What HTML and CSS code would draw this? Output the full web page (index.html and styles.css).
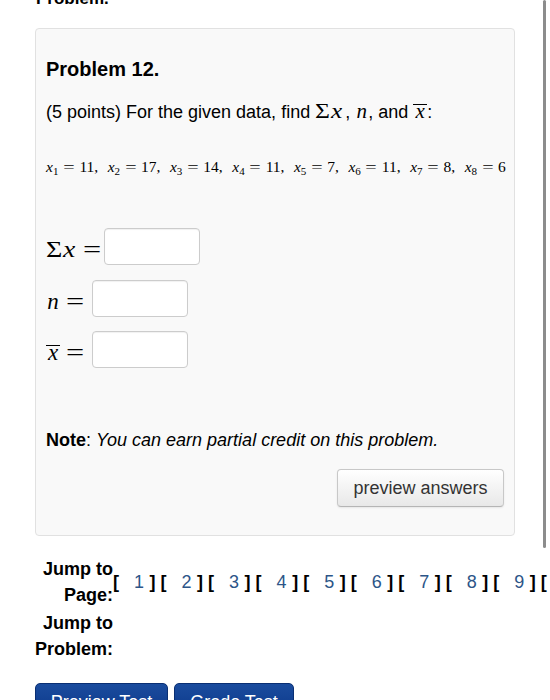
FILE: index.html
```html
<!DOCTYPE html>
<html>
<head>
<meta charset="utf-8">
<link rel="stylesheet" href="styles.css">
</head>
<body>
<div class="page">
  <div class="prev-title">Problem.</div>
  <div class="card">
    <h2 class="ptitle">Problem 12.</h2>
    <p class="intro">(5 points) For the given data, find <span class="m"><span class="g gs">Σ</span><i class="g gx">x</i></span>, <span class="m"><i class="g gn">n</i></span>, and <span class="m"><i class="g bar">x</i></span>:</p>
    <p class="data"><span class="m"><span class="it"><i>x</i><sub>1</sub><span class="mo">=</span>11,</span><span class="it"><i>x</i><sub>2</sub><span class="mo">=</span>17,</span><span class="it"><i>x</i><sub>3</sub><span class="mo">=</span>14,</span><span class="it"><i>x</i><sub>4</sub><span class="mo">=</span>11,</span><span class="it"><i>x</i><sub>5</sub><span class="mo">=</span>7,</span><span class="it"><i>x</i><sub>6</sub><span class="mo">=</span>11,</span><span class="it"><i>x</i><sub>7</sub><span class="mo">=</span>8,</span><span class="it last"><i>x</i><sub>8</sub><span class="mo">=</span>6</span></span></p>
    <div class="answers">
      <div class="arow"><span class="m lab"><span class="g gs">Σ</span><i class="g gx">x</i></span><span class="m eq">=</span><input class="ans ans-sum" type="text"></div>
      <div class="arow"><span class="m lab"><i class="g gn">n</i></span><span class="m eq">=</span><input class="ans" type="text"></div>
      <div class="arow"><span class="m lab"><i class="g bar">x</i></span><span class="m eq">=</span><input class="ans" type="text"></div>
    </div>
    <p class="note"><b>Note</b>: <i>You can earn partial credit on this problem.</i></p>
    <div class="actions"><button class="btn-preview" type="button">preview answers</button></div>
  </div>
  <table class="jump">
    <tr class="jrow1">
      <th class="jlabel">Jump to<br>Page:</th>
      <td class="jlinks"><b>[</b><a class="pg">1</a><b>]</b> <b>[</b><a class="pg">2</a><b>]</b> <b>[</b><a class="pg">3</a><b>]</b> <b>[</b><a class="pg">4</a><b>]</b> <b>[</b><a class="pg">5</a><b>]</b> <b>[</b><a class="pg">6</a><b>]</b> <b>[</b><a class="pg">7</a><b>]</b> <b>[</b><a class="pg">8</a><b>]</b> <b>[</b><a class="pg">9</a><b>]</b> <b>[</b><a class="pg">10</a><b>]</b></td>
    </tr>
    <tr class="jrow2">
      <th class="jlabel">Jump to<br>Problem:</th>
      <td></td>
    </tr>
  </table>
  <div class="tests">
    <button class="btn-test btn-prev" type="button">Preview Test</button>
    <button class="btn-test btn-grade" type="button">Grade Test</button>
  </div>
</div>
<div class="scrollbar"></div>
</body>
</html>
```
FILE: styles.css
```css
html, body {
  margin: 0;
  padding: 0;
  overflow: hidden;
  background: #fff;
}
body {
  font-family: "Liberation Sans", Arial, sans-serif;
  font-size: 18px;
  color: #000;
  width: 550px;
  height: 700px;
  position: relative;
}
.page {
  padding-left: 35px;
}
.prev-title {
  font-weight: bold;
  font-size: 17px;
  line-height: 20px;
  margin-top: -11px;
  margin-left: 1px;
}
.card {
  width: 480px;
  box-sizing: border-box;
  margin-top: 19px;
  background: #f9f9f9;
  border: 1px solid #e1e1e1;
  border-radius: 4px;
  padding: 28px 10px 28px 10px;
}
.ptitle {
  margin: 0;
  font-size: 20px;
  line-height: 24px;
  font-weight: bold;
}
.intro {
  margin: 20px 0 0 0;
  line-height: 22px;
}
.m {
  font-family: "Liberation Serif", "Times New Roman", serif;
  line-height: 1;
}
.m i {
  font-style: italic;
}
.g {
  display: inline-block;
  text-align: center;
}
.gs {
  transform: scaleX(1.22);
  transform-origin: left center;
  text-align: left;
}
.gx {
  transform: scaleX(1.2);
  transform-origin: left center;
  text-align: left;
}
.intro .m {
  font-size: 21px;
}
.intro .gs {
  width: 16px;
}
.intro .gx {
  width: 14px;
}
.intro .gn {
  width: 13px;
}
.intro .bar {
  width: 14px;
  line-height: 13px;
}
.bar {
  border-top: 1.5px solid #000;
}
.data {
  margin: 34px 0 0 0;
  line-height: 20px;
  font-size: 14px;
}
.data .m {
  font-size: 15.5px;
  white-space: nowrap;
}
.data .it {
  margin-right: 9.5px;
}
.data .it.last {
  margin-right: 0;
}
.data sub {
  font-size: 11px;
  line-height: 0;
  vertical-align: -3px;
}
.mo {
  display: inline-block;
  width: 12px;
  margin: 0 4.5px;
  text-align: center;
  transform: scaleX(1.3);
}
.answers {
  margin-top: 51px;
  display: flex;
  flex-direction: column;
  gap: 14.5px;
}
.arow {
  display: flex;
  align-items: center;
  height: 37px;
}
.lab {
  font-size: 23px;
  margin-top: 6px;
  white-space: nowrap;
}
.lab .gs {
  width: 17px;
}
.lab .gx {
  width: 14px;
}
.lab .gn {
  width: 14px;
}
.lab .bar {
  width: 14px;
  line-height: 14px;
}
.eq {
  font-size: 23px;
  margin-top: 6px;
  margin-left: 6px;
  width: 18px;
  text-align: center;
  display: inline-block;
  transform: scaleX(1.4);
}
.ans {
  width: 96px;
  height: 37px;
  box-sizing: border-box;
  margin: 0 0 0 8px;
  border: 1px solid #cccccc;
  border-radius: 4px;
  background: #fff;
  box-shadow: inset 0 1px 1px rgba(0,0,0,0.06);
  padding: 0 6px;
  font-size: 16px;
}
.ans-sum {
  margin-left: 3px;
}
.note {
  margin: 61px 0 0 0;
  line-height: 22px;
}
.actions {
  margin-top: 18px;
  display: flex;
  justify-content: flex-end;
}
.btn-preview {
  font-family: "Liberation Sans", Arial, sans-serif;
  font-size: 18px;
  color: #333;
  height: 38px;
  width: 167px;
  padding: 0;
  border: 1px solid #c8c8c8;
  border-bottom-color: #b5b5b5;
  border-radius: 4px;
  background: linear-gradient(#ffffff, #e8e8e8);
  box-shadow: 0 1px 2px rgba(0,0,0,0.08);
}
.jump {
  margin-top: 20px;
  border-collapse: collapse;
  white-space: nowrap;
}
.jump th, .jump td {
  padding: 0;
}
.jlabel {
  font-size: 18px;
  font-weight: bold;
  text-align: right;
  vertical-align: top;
  line-height: 26px;
}
.jrow2 .jlabel {
  padding-top: 2px;
}
.jlinks {
  vertical-align: middle;
  font-size: 18px;
  padding-left: 3px;
}
.pg {
  color: #2c5588;
  margin-left: 15px;
  margin-right: 5.5px;
  text-decoration: none;
}
.tests {
  margin-top: 21px;
  display: flex;
  gap: 6px;
}
.btn-test {
  font-family: "Liberation Sans", Arial, sans-serif;
  font-size: 18px;
  color: #fff;
  height: 38px;
  padding: 0;
  border: 1px solid #0a2f73;
  border-radius: 5px;
  background: linear-gradient(#1a4c9e, #0a3587);
}
.btn-prev {
  width: 133px;
}
.btn-grade {
  width: 120px;
}
.scrollbar {
  position: absolute;
  left: 543px;
  top: 0;
  width: 3px;
  height: 548px;
  border-radius: 2px;
  background: #8c8c8c;
}
```
